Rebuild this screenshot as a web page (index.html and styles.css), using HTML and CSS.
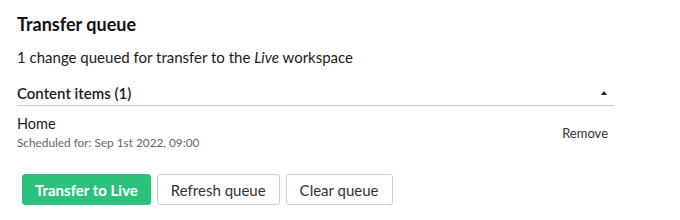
FILE: index.html
```html
<!DOCTYPE html>
<html lang="en">

<head>
	<meta charset="UTF-8">
	<link rel="stylesheet" href="styles.css">
	<title>Transfer queue</title>
</head>

<body>
	<div class="queue">
		<h2 class="queue-title">Transfer queue</h2>
		<p class="queue-info">1 change queued for transfer to the <em>Live</em> workspace</p>

		<div class="queue-group">
			<div class="group-header">
				<span>Content items (1)</span>
				<span class="caret"></span>
			</div>
			<div class="queue-item">
				<div>
					<div class="item-name">Home</div>
					<div class="item-meta">Scheduled for: Sep 1st 2022, 09:00</div>
				</div>
				<button class="link-btn">Remove</button>
			</div>
		</div>

		<div class="actions">
			<button class="btn btn-success">Transfer to Live</button>
			<button class="btn">Refresh queue</button>
			<button class="btn">Clear queue</button>
		</div>
	</div>
</body>

</html>
```

FILE: styles.css
```css
body {
	margin: 0;
	background-color: #fff;
	font-family: Lato, "Open Sans", sans-serif;
	color: #1b1b1b;
}

.queue {
	width: 597px;
	padding: 13px 0 0 17px;
}

.queue-title {
	margin: 0;
	font-size: 18px;
	line-height: 22px;
	font-weight: 700;
	color: #111;
}

.queue-info {
	margin: 12px 0 0 0;
	font-size: 15px;
	line-height: 20px;
}

.queue-group {
	margin-top: 16px;
}

.group-header {
	display: flex;
	justify-content: space-between;
	align-items: center;
	font-size: 15px;
	line-height: 20px;
	font-weight: 600;
	padding-bottom: 2px;
	border-bottom: 1px solid #c8c8c8;
}

.caret {
	width: 0;
	height: 0;
	margin-right: 7px;
	border-left: 3.5px solid transparent;
	border-right: 3.5px solid transparent;
	border-bottom: 4px solid #222;
}

.queue-item {
	display: flex;
	justify-content: space-between;
	align-items: center;
	padding-top: 8px;
}

.item-name {
	font-size: 14.5px;
	line-height: 20px;
}

.item-meta {
	font-size: 11.8px;
	line-height: 17px;
	color: #666;
}

.link-btn {
	background: none;
	border: none;
	padding: 0 6px 0 0;
	font-family: inherit;
	font-size: 13px;
	color: #333;
	cursor: pointer;
}

.actions {
	display: flex;
	gap: 6px;
	margin: 23px 0 0 5px;
}

.btn {
	height: 31px;
	padding: 0 13px;
	font-family: inherit;
	font-size: 15px;
	color: #333;
	background-color: #fff;
	border: 1px solid #cfcfcf;
	border-radius: 3px;
	cursor: pointer;
}

.btn-success {
	padding: 0 12px;
	background-color: #2bc37c;
	border-color: #2bc37c;
	color: #fff;
	font-weight: 700;
}
```
